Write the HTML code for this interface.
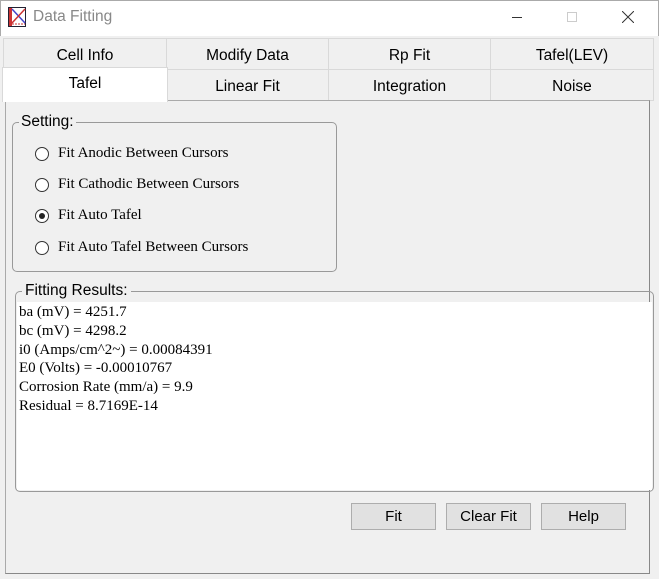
<!DOCTYPE html><html><head><style>
body{margin:0;width:659px;height:579px;background:#f0f0f0;position:relative;overflow:hidden;font-family:"Liberation Sans",sans-serif;}
.a{position:absolute;box-sizing:border-box}
.tab{position:absolute;box-sizing:border-box;border:1px solid #d9d9d9;background:#f0f0f0;font-size:15.5px;color:#000;text-align:center;}
.r{position:absolute;left:35px;width:14px;height:14px;border:1px solid #333;border-radius:50%;box-sizing:border-box;background:#fff}
.rl{position:absolute;left:58px;font-family:"Liberation Serif",serif;font-size:15px;}
.btn{position:absolute;box-sizing:border-box;border:1px solid #adadad;background:#e1e1e1;font-size:15px;text-align:center;line-height:26px;top:503px;height:27px;width:85px}
.t{font-family:"Liberation Serif",serif;font-size:15px;line-height:18.8px}
</style></head><body>
<div class="a" style="left:0;top:0;width:659px;height:36px;background:#fff;border:1px solid #aaa;border-bottom:none"></div>
<svg class="a" style="left:8px;top:7px" width="18" height="20"><rect x="0.5" y="0.5" width="17" height="19" fill="#fff" stroke="#223"/><rect x="1" y="1" width="3" height="18" fill="#c33"/><line x1="4" y1="2" x2="17" y2="16" stroke="#44c" stroke-width="1.5"/><line x1="17" y1="2" x2="4" y2="16" stroke="#c33" stroke-width="1.5"/><line x1="4" y1="17" x2="17" y2="17" stroke="#c33" stroke-dasharray="2 1"/></svg>
<div class="a" style="left:33px;top:8px;font-size:15.5px;color:#888">Data Fitting</div>
<div class="a" style="left:512px;top:17px;width:10px;height:1px;background:#333"></div>
<div class="a" style="left:567px;top:12px;width:10px;height:10px;border:1px solid #ccc"></div>
<svg class="a" style="left:622px;top:11px" width="12" height="12"><path d="M0 0L12 12M12 0L0 12" stroke="#333"/></svg>
<div class="tab" style="left:3px;top:38px;width:164px;height:32px;line-height:34px">Cell Info</div>
<div class="tab" style="left:166px;top:38px;width:163px;height:32px;line-height:34px">Modify Data</div>
<div class="tab" style="left:328px;top:38px;width:163px;height:32px;line-height:34px">Rp Fit</div>
<div class="tab" style="left:490px;top:38px;width:164px;height:32px;line-height:34px">Tafel(LEV)</div>
<div class="tab" style="left:166px;top:69px;width:163px;height:32px;line-height:34px">Linear Fit</div>
<div class="tab" style="left:328px;top:69px;width:163px;height:32px;line-height:34px">Integration</div>
<div class="tab" style="left:490px;top:69px;width:164px;height:32px;line-height:34px">Noise</div>
<div class="a" style="left:5px;top:100px;width:645px;height:474px;border:1px solid #aaa;border-right-color:#888;border-bottom-color:#888"></div>
<div class="tab" style="left:2px;top:67px;width:166px;height:35px;line-height:32px;background:#fff;border-bottom:none">Tafel</div>
<div class="a" style="left:12px;top:122px;width:325px;height:150px;border:1px solid #999;border-radius:5px"></div>
<div class="a" style="left:19px;top:113px;background:#f0f0f0;padding:0 2px;font-size:15.5px">Setting:</div>
<div class="r" style="top:147px"></div><div class="rl" style="top:145px">Fit Anodic Between Cursors</div>
<div class="r" style="top:178px"></div><div class="rl" style="top:176px">Fit Cathodic Between Cursors</div>
<div class="r" style="top:209px"></div><div class="a" style="left:39px;top:213px;width:6px;height:6px;border-radius:50%;background:#222"></div><div class="rl" style="top:207px">Fit Auto Tafel</div>
<div class="r" style="top:241px"></div><div class="rl" style="top:239px">Fit Auto Tafel Between Cursors</div>
<div class="a" style="left:15px;top:291px;width:639px;height:201px;border:1px solid #999;border-radius:5px"></div>
<div class="a" style="left:17px;top:302px;width:635px;height:188px;background:#fff"></div>
<div class="a" style="left:22px;top:282px;background:#f0f0f0;padding:0 3px;font-size:15.5px">Fitting Results:</div>
<div class="a t" style="left:19px;top:303px">ba (mV) = 4251.7<br>bc (mV) = 4298.2<br>i0 (Amps/cm^2~) = 0.00084391<br>E0 (Volts) = -0.00010767<br>Corrosion Rate (mm/a) = 9.9<br>Residual = 8.7169E-14</div>
<div class="btn" style="left:351px">Fit</div>
<div class="btn" style="left:446px">Clear Fit</div>
<div class="btn" style="left:541px">Help</div>
</body></html>
